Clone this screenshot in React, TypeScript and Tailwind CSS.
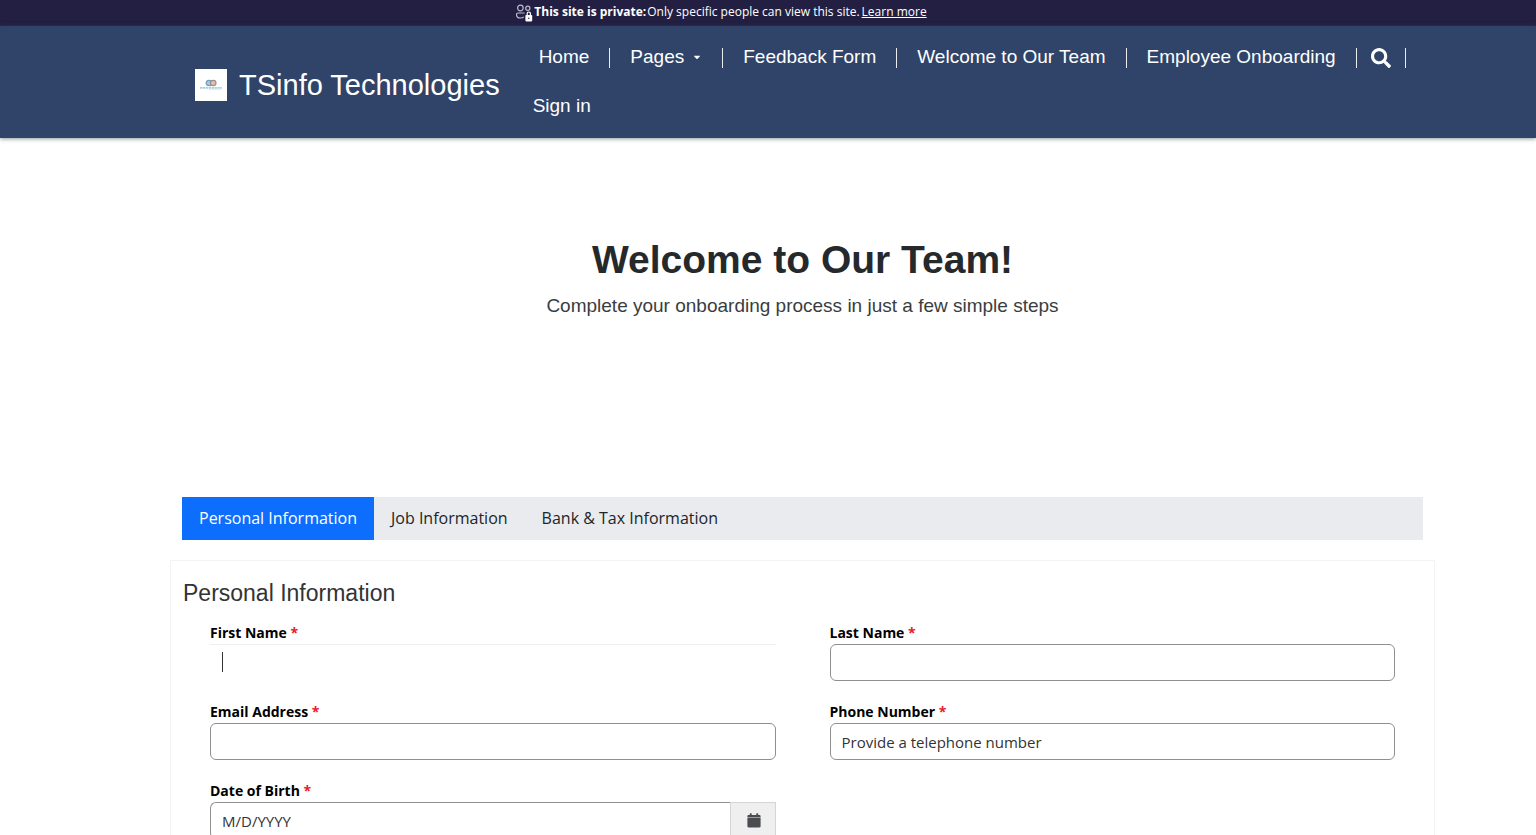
import type { ReactNode } from "react";
import { FaCaretDown, FaSearch } from "react-icons/fa";

const navLink = "whitespace-nowrap text-[19px] leading-6 text-white";

function Divider() {
  return <span aria-hidden="true" className="mt-[2px] h-5 w-px shrink-0 bg-white/90" />;
}

function PrivateSiteIcon() {
  return (
    <svg viewBox="0 0 18 18" className="mt-[2px] size-[18px] shrink-0" fill="none" stroke="#bdbacb" strokeWidth="1.2">
      <circle cx="5.4" cy="4" r="2.8" />
      <circle cx="12.8" cy="4.2" r="2.1" />
      <path d="M9.6 9H3C2 9 1.5 9.6 1.5 10.4c0 2.4 1.6 3.6 4 3.6 1.5 0 2.6-.4 3.3-1.2" />
      <path d="M12.2 11V9.6a1.6 1.6 0 0 1 3.2 0V11" stroke="#fff" />
      <rect x="10.4" y="11" width="6.8" height="6.4" rx="0.8" fill="#fff" stroke="none" />
      <circle cx="13.8" cy="14.2" r="0.7" fill="#231f42" stroke="none" />
    </svg>
  );
}

function Logo() {
  return (
    <svg viewBox="0 0 32 32" className="size-8 shrink-0" role="img" aria-label="TSinfo Technologies logo">
      <rect width="32" height="32" fill="#fff" />
      <ellipse cx="14.4" cy="14" rx="3.2" ry="2.7" fill="#a9cbdb" stroke="#6f9fbd" strokeWidth="1.2" />
      <ellipse cx="18.2" cy="14" rx="2.8" ry="2.6" fill="#dfc0b2" stroke="#a08f90" strokeWidth="1.2" />
      <path d="M5 18.8h22" stroke="#a9cede" strokeWidth="1.8" strokeDasharray="2.4 .5" />
      <path d="M14 20.6h12" stroke="#d6e7ee" strokeWidth="0.8" />
    </svg>
  );
}

function CalendarIcon() {
  return (
    <svg viewBox="0 0 14 15" className="ml-[2px] h-[15px] w-[14px]" fill="#4a4c50">
      <path d="M1.6 2h1.2V.8c0-.3.2-.5.5-.5h.9c.3 0 .5.2.5.5V2h4.6V.8c0-.3.2-.5.5-.5h.9c.3 0 .5.2.5.5V2h1.2c.7 0 1.2.5 1.2 1.2v1.3H.4V3.2C.4 2.5.9 2 1.6 2z" />
      <path d="M.4 5h13.2v8.2c0 .7-.5 1.2-1.2 1.2H1.6c-.7 0-1.2-.5-1.2-1.2z" />
    </svg>
  );
}

function Field({ id, label, children }: { id: string; label: string; children: ReactNode }) {
  return (
    <div className="flex flex-col">
      <label htmlFor={id} className="h-[22px] text-[14px] leading-[22px] font-bold text-black">
        {label} <span className="text-[#e8192c]">*</span>
      </label>
      {children}
    </div>
  );
}

const inputBase =
  "h-[37px] w-full min-w-0 px-[11px] text-[15px] text-[#333] placeholder:text-[#333] placeholder:opacity-100 outline-none";
const boxed = "rounded-[6px] border border-[#8f8f8f] bg-white";

export default function App() {
  return (
    <div className="bg-white font-['Liberation_Sans',Arial,sans-serif] text-[#2b2b2b]">
      <div className="flex h-[26px] items-center justify-center bg-[#231f42] pr-[94px] pb-[2px] font-['Open_Sans','Segoe_UI',sans-serif] text-[12px] text-white">
        <PrivateSiteIcon />
        <strong className="ml-px font-bold">This site is private:</strong>
        <span className="ml-px">Only specific people can view this site.</span>
        <a href="#learn" className="ml-[2px] underline">Learn more</a>
      </div>

      <header className="flex min-h-[112px] items-start bg-[#30446a] pr-[120px] pl-[195px] shadow-[0_1px_4px_rgba(60,90,90,0.6)]">
        <a href="#home" className="mt-[43px] flex shrink-0 items-center gap-3 text-white">
          <Logo />
          <span className="text-[29px] leading-8 whitespace-nowrap">TSinfo Technologies</span>
        </a>
        <nav aria-label="Main" className="mt-[19px] ml-[33px] flex flex-col items-start gap-[25px]">
          <div className="flex items-center gap-5 pl-[6px]">
            <a href="#home" className={navLink}>Home</a>
            <Divider />
            <button type="button" className={`${navLink} flex items-center gap-2`}>
              Pages <FaCaretDown className="size-[10px]" />
            </button>
            <Divider />
            <a href="#feedback" className={navLink}>Feedback Form</a>
            <Divider />
            <a href="#welcome" className={navLink}>Welcome to Our Team</a>
            <Divider />
            <a href="#onboarding" className={navLink}>Employee Onboarding</a>
            <div className="flex items-center gap-[14px]">
              <Divider />
              <button type="button" aria-label="Search" className="mt-[2px] text-white">
                <FaSearch className="size-5" />
              </button>
              <Divider />
            </div>
          </div>
          <a href="#signin" className={navLink}>Sign in</a>
        </nav>
      </header>

      <main className="pr-[101px] pl-[170px]">
        <section className="pt-[98px] pb-[177px] text-center">
          <h1 className="text-[39px] leading-[48px] font-bold text-[#26292c]">Welcome to Our Team!</h1>
          <p className="mt-2 text-[19px] leading-7 text-[#3a3d40]">Complete your onboarding process in just a few simple steps</p>
        </section>

        <div role="tablist" className="mx-3 flex bg-[#e9ebef] font-['Open_Sans','Segoe_UI',sans-serif] text-[16px] leading-[43px] text-[#212529]">
          <button type="button" role="tab" aria-selected="true" className="bg-[#0d6efd] px-[17px] text-white">Personal Information</button>
          <button type="button" role="tab" aria-selected="false" className="px-[17px]">Job Information</button>
          <button type="button" role="tab" aria-selected="false" className="px-[17px]">Bank &amp; Tax Information</button>
        </div>

        <form className="mt-5 border border-[#f4f4f4] px-3 pt-4 pb-8">
          <h2 className="text-[23px] leading-8 text-[#333]">Personal Information</h2>
          <div className="mt-[13px] grid grid-cols-2 gap-x-[54px] gap-y-5 px-[27px] font-['Open_Sans','Segoe_UI',sans-serif]">
            <Field id="first" label="First Name">
              <div className="relative">
                <input id="first" autoFocus className={`${inputBase} border-t border-[#eee] caret-transparent`} />
                <span aria-hidden="true" className="absolute top-2 left-3 h-5 w-px bg-[#333]" />
              </div>
            </Field>
            <Field id="last" label="Last Name">
              <input id="last" className={`${inputBase} ${boxed}`} />
            </Field>
            <Field id="email" label="Email Address">
              <input id="email" type="email" className={`${inputBase} ${boxed}`} />
            </Field>
            <Field id="phone" label="Phone Number">
              <input id="phone" type="tel" placeholder="Provide a telephone number" className={`${inputBase} ${boxed}`} />
            </Field>
            <Field id="dob" label="Date of Birth">
              <div className="flex">
                <input id="dob" placeholder="M/D/YYYY" className={`${inputBase} rounded-l-[6px] border border-r-0 border-[#8f8f8f]`} />
                <button type="button" aria-label="Choose a date" className="flex w-[46px] shrink-0 items-center justify-center border border-[#d5d5d5] bg-[#efefef]">
                  <CalendarIcon />
                </button>
              </div>
            </Field>
          </div>
        </form>
      </main>
    </div>
  );
}
